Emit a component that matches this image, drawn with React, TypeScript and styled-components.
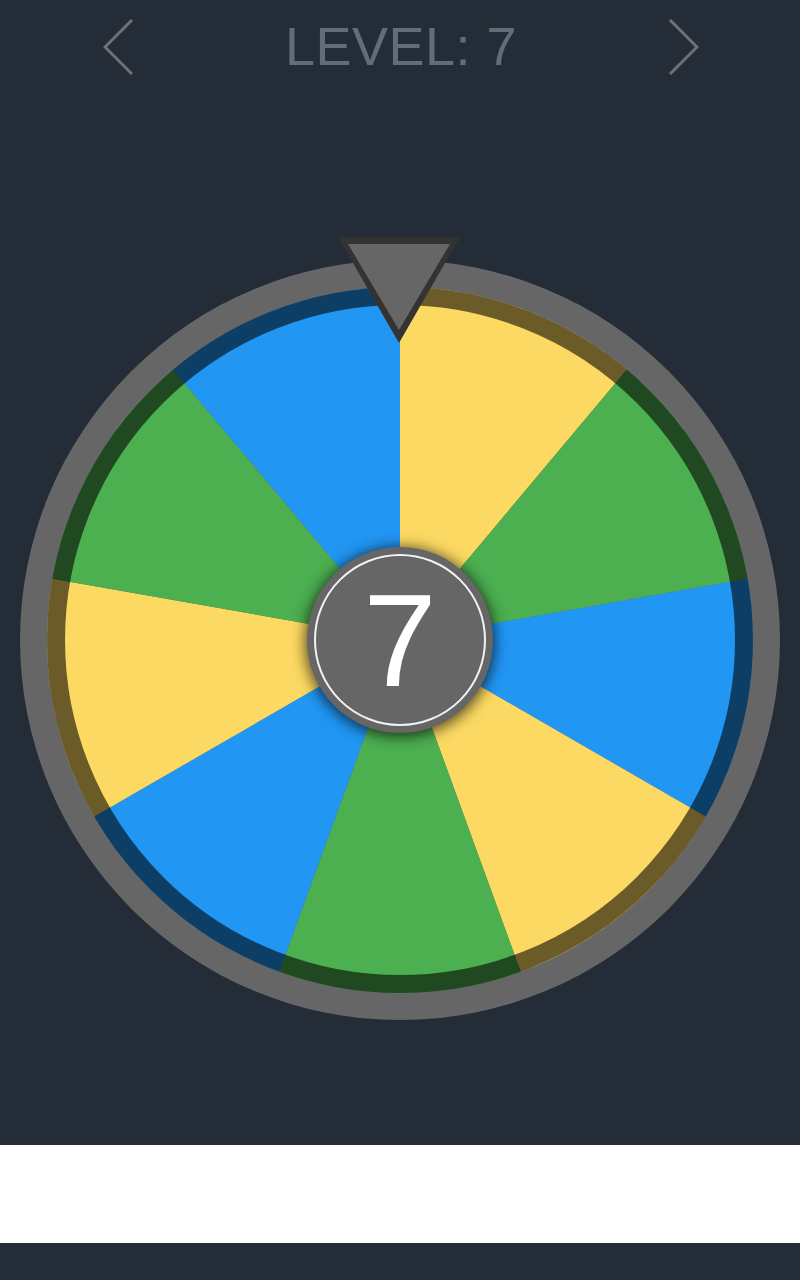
import React from "react";
import styled, { createGlobalStyle } from "styled-components";

const GlobalStyle = createGlobalStyle`
  html, body {
    margin: 0;
    padding: 0;
    background: #232c37;
  }
  * {
    box-sizing: border-box;
  }
`;

const WHEEL_SIZE = 760;
const SEGMENT_RADIUS = 353;
const COLORS = {
  yellow: "#fcd962",
  green: "#4caf50",
  blue: "#2196f3",
};

const segments = [
  COLORS.yellow,
  COLORS.green,
  COLORS.blue,
  COLORS.yellow,
  COLORS.green,
  COLORS.blue,
  COLORS.yellow,
  COLORS.green,
  COLORS.blue,
];

const Screen = styled.div`
  width: 800px;
  min-height: 1280px;
  display: flex;
  flex-direction: column;
  background: #232c37;
  font-family: "Liberation Sans", Arial, sans-serif;
`;

const Header = styled.header`
  height: 92px;
  padding: 2px 101px 0 103px;
  display: flex;
  align-items: center;
  justify-content: space-between;
`;

const NavButton = styled.button`
  width: 31px;
  height: 56px;
  padding: 0;
  border: none;
  background: none;
  cursor: pointer;
  display: flex;
  align-items: center;
  justify-content: center;
`;

const Title = styled.h1`
  margin: 0 0 2px;
  font-size: 54px;
  font-weight: 400;
  letter-spacing: 0.5px;
  color: #646d77;
`;

const Stage = styled.main`
  padding-top: 168px;
  padding-bottom: 125px;
  display: flex;
  justify-content: center;
`;

const WheelWrap = styled.div`
  position: relative;
  width: ${WHEEL_SIZE}px;
  height: ${WHEEL_SIZE}px;
`;

const Pointer = styled.svg`
  position: absolute;
  left: 318px;
  top: -23px;
`;

const Hub = styled.div`
  position: absolute;
  left: 50%;
  top: 50%;
  width: 186px;
  height: 186px;
  margin: -93px 0 0 -93px;
  border-radius: 50%;
  background: #666666;
  box-shadow: 0 2px 14px 2px rgba(0, 0, 0, 0.65);
  display: flex;
  align-items: center;
  justify-content: center;
`;

const HubRing = styled.div`
  width: 172px;
  height: 172px;
  border-radius: 50%;
  border: 2px solid #f2f2f2;
  display: flex;
  align-items: center;
  justify-content: center;
`;

const HubNumber = styled.span`
  font-size: 132px;
  line-height: 1;
  color: #ffffff;
  margin-top: 2px;
`;

const Banner = styled.div`
  height: 98px;
  background: #ffffff;
`;

const Chevron = ({ dir }: { dir: "left" | "right" }) => (
  <svg width="31" height="56" viewBox="0 0 31 56">
    <polyline
      points={dir === "left" ? "29,1 2,28 29,55" : "2,1 29,28 2,55"}
      fill="none"
      stroke="#6b7279"
      strokeWidth="3"
    />
  </svg>
);

const slicePath = (index: number, count: number, r: number, c: number) => {
  const step = (Math.PI * 2) / count;
  const a0 = index * step - Math.PI / 2;
  const a1 = a0 + step;
  const x0 = c + r * Math.cos(a0);
  const y0 = c + r * Math.sin(a0);
  const x1 = c + r * Math.cos(a1);
  const y1 = c + r * Math.sin(a1);
  return `M${c},${c} L${x0},${y0} A${r},${r} 0 0 1 ${x1},${y1} Z`;
};

const Wheel = () => {
  const c = WHEEL_SIZE / 2;
  return (
    <svg width={WHEEL_SIZE} height={WHEEL_SIZE} viewBox={`0 0 ${WHEEL_SIZE} ${WHEEL_SIZE}`}>
      <circle cx={c} cy={c} r={c} fill="#666666" />
      {segments.map((color, i) => (
        <path key={i} d={slicePath(i, segments.length, SEGMENT_RADIUS, c)} fill={color} />
      ))}
      <circle
        cx={c}
        cy={c}
        r={SEGMENT_RADIUS - 9}
        fill="none"
        stroke="rgba(0,0,0,0.58)"
        strokeWidth="18"
      />
    </svg>
  );
};

export default function App() {
  return (
    <>
      <GlobalStyle />
      <Screen>
        <Header>
          <NavButton aria-label="Previous level">
            <Chevron dir="left" />
          </NavButton>
          <Title>LEVEL: 7</Title>
          <NavButton aria-label="Next level">
            <Chevron dir="right" />
          </NavButton>
        </Header>
        <Stage>
          <WheelWrap>
            <Wheel />
            <Pointer width="122" height="106" viewBox="0 0 122 106">
              <polygon points="0,0 122,0 61,106" fill="#333333" />
              <polygon points="10,7 112,7 61,93" fill="#666666" />
            </Pointer>
            <Hub>
              <HubRing>
                <HubNumber>7</HubNumber>
              </HubRing>
            </Hub>
          </WheelWrap>
        </Stage>
        <Banner />
      </Screen>
    </>
  );
}
